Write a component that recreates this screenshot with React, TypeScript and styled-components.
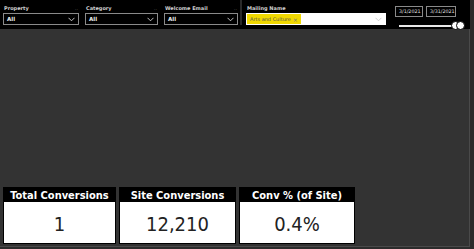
import styled, { createGlobalStyle } from 'styled-components'

const GlobalStyle = createGlobalStyle`
  html, body {
    margin: 0;
    background: #2c2c2c;
  }
  body {
    font-family: "DejaVu Sans Condensed", "Liberation Sans", sans-serif;
  }
`

const slicers = [
  { label: 'Property', width: 76 },
  { label: 'Category', width: 73 },
  { label: 'Welcome Email', width: 74 },
]

const cards = [
  { title: 'Total Conversions', value: '1', width: 113 },
  { title: 'Site Conversions', value: '12,210', width: 117 },
  { title: 'Conv % (of Site)', value: '0.4%', width: 116 },
]

function Chevron({ color }: { color: string }) {
  return (
    <svg width="7" height="5" viewBox="0 0 7 5">
      <polyline points="0.5,0.8 3.5,3.8 6.5,0.8" fill="none" stroke={color} strokeWidth="0.9" />
    </svg>
  )
}

function App() {
  return (
    <>
      <GlobalStyle />
      <Canvas>
        <FilterBar>
          <SlicerGroup>
            {slicers.map((s) => (
              <Slicer key={s.label} width={s.width}>
                <LabelRow>
                  <span>{s.label}</span>
                  <Dots>‥</Dots>
                </LabelRow>
                <Dropdown>
                  <span>All</span>
                  <Chevron color="#d8d8d8" />
                </Dropdown>
              </Slicer>
            ))}
          </SlicerGroup>
          <MailingPanel>
            <LabelRow>
              <span>Mailing Name</span>
            </LabelRow>
            <SearchBox>
              <Chip>
                Arts and Culture <ChipX>×</ChipX>
              </Chip>
              <Chevron color="#c8c8c8" />
            </SearchBox>
          </MailingPanel>
          <DatePanel>
            <DateRow>
              <DateBox>3/1/2021</DateBox>
              <DateBox>3/31/2021</DateBox>
            </DateRow>
            <Slider>
              <Track />
              <Thumb />
              <Thumb />
            </Slider>
          </DatePanel>
        </FilterBar>

        <CardRow>
          {cards.map((c) => (
            <Card key={c.title} width={c.width}>
              <CardHeader>{c.title}</CardHeader>
              <CardValue>{c.value}</CardValue>
            </Card>
          ))}
        </CardRow>
      </Canvas>
    </>
  )
}

const Canvas = styled.div`
  width: 469px;
  height: 246px;
  background: #333333;
  border-right: 1px solid #4a4a4a;
  border-bottom: 1px solid #4a4a4a;
  display: flex;
  flex-direction: column;
  justify-content: space-between;
`

const FilterBar = styled.div`
  height: 29px;
  width: 470px;
  background: #000;
  display: flex;
  align-items: flex-start;
`

const SlicerGroup = styled.div`
  display: flex;
  gap: 6px;
  padding-left: 3px;
  padding-top: 4px;
`

const Slicer = styled.div<{ width: number }>`
  width: ${({ width }) => width}px;
  display: flex;
  flex-direction: column;
  gap: 2px;
`

const LabelRow = styled.div`
  display: flex;
  justify-content: space-between;
  align-items: center;
  height: 7px;
  padding: 0 1px;
  color: #d0d0d0;
  font-family: "DejaVu Sans", sans-serif;
  font-size: 5px;
  font-weight: bold;
`

const Dots = styled.span`
  color: #777;
  font-weight: normal;
`

const Dropdown = styled.div`
  height: 10px;
  border: 1px solid #8a8a8a;
  background: #000;
  display: flex;
  align-items: center;
  justify-content: space-between;
  padding: 0 3px 0 3px;
  color: #f0f0f0;
  font-family: "DejaVu Sans", sans-serif;
  font-size: 5.5px;
  font-weight: bold;
`

const MailingPanel = styled.div`
  margin-left: 2px;
  border-left: 2px solid #2a2a2a;
  padding: 4px 0 0 4px;
  width: 142px;
  display: flex;
  flex-direction: column;
  gap: 2px;
`

const SearchBox = styled.div`
  height: 12px;
  width: 140px;
  background: #fff;
  display: flex;
  align-items: center;
  justify-content: space-between;
  padding: 0 4px 0 1px;
  box-sizing: border-box;
`

const Chip = styled.div`
  height: 10px;
  background: #f0d800;
  color: #555;
  font-family: "DejaVu Sans", sans-serif;
  font-size: 5px;
  display: flex;
  align-items: center;
  gap: 2px;
  padding: 0 3px;
`

const ChipX = styled.span`
  color: #777;
  font-size: 6px;
`

const DatePanel = styled.div`
  margin-left: 7px;
  padding-top: 6px;
  display: flex;
  flex-direction: column;
  gap: 4px;
`

const DateRow = styled.div`
  display: flex;
  gap: 3px;
`

const DateBox = styled.div`
  height: 9px;
  padding: 0 3px;
  border: 1px solid #8a8a8a;
  color: #e0e0e0;
  font-family: "DejaVu Sans", sans-serif;
  font-size: 4.8px;
  display: flex;
  align-items: center;
  &:first-child {
    width: 20px;
  }
  &:last-child {
    width: 22px;
  }
`

const Slider = styled.div`
  position: relative;
  margin-left: 4px;
  width: 62px;
  height: 9px;
`

const Track = styled.div`
  position: absolute;
  left: 0;
  right: 6px;
  top: 4px;
  height: 2px;
  background: #e8e8e8;
`

const Thumb = styled.div`
  position: absolute;
  top: 0;
  width: 9px;
  height: 9px;
  border-radius: 50%;
  background: #fff;
  border: 1px solid #000;
  box-sizing: border-box;
  left: 52px;
  & + & {
    left: 57px;
  }
`

const CardRow = styled.div`
  display: flex;
  gap: 3px;
  padding: 0 0 2px 3px;
`

const Card = styled.div<{ width: number }>`
  width: ${({ width }) => width}px;
  height: 57px;
  border: 1px solid #000;
  box-sizing: border-box;
  background: #fff;
  display: flex;
  flex-direction: column;
`

const CardHeader = styled.div`
  height: 14px;
  background: #000;
  color: #fff;
  font-weight: bold;
  font-size: 11px;
  display: flex;
  align-items: center;
  justify-content: center;
  white-space: nowrap;
`

const CardValue = styled.div`
  flex: 1;
  color: #222;
  font-size: 20px;
  display: flex;
  align-items: center;
  justify-content: center;
  padding-top: 2px;
`

export default App
